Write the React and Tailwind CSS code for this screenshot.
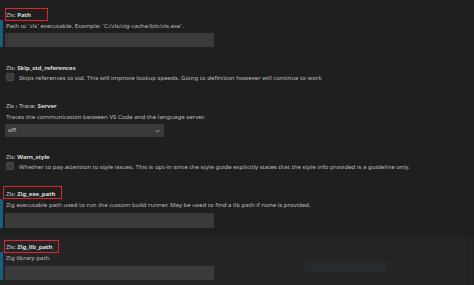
import React from "react";

const font = { fontFamily: '"Noto Sans", "Open Sans", sans-serif' };

function Title({ prefix, name, box }) {
  return (
    <div className="relative pl-[6px] h-[11px] leading-[11px] text-[6.1px] text-[#cccccc] whitespace-nowrap">
      {prefix} <span className="font-semibold text-[#ececec]">{name}</span>
      {box && (
        <div
          className={`absolute h-[13px] border-[1.5px] border-[#e3242b] ${box}`}
        />
      )}
    </div>
  );
}

function Body({ active, children }) {
  return (
    <div
      className={`border-l-[3px] pl-[3px] ${
        active ? "border-[#17607f]" : "border-transparent"
      }`}
    >
      {children}
    </div>
  );
}

function Desc({ children }) {
  return (
    <div className="h-[11px] leading-[11px] text-[6.1px] text-[#bdbdbd] whitespace-nowrap">
      {children}
    </div>
  );
}

function TextInput({ h = "h-[14px]" }) {
  return <div className={`mt-[2.5px] -ml-[1px] w-[209px] ${h} bg-[#3a3a3a]`} />;
}

function Check({ children }) {
  return (
    <div className="flex items-start gap-[5px] h-[9px]">
      <div className="w-[8px] h-[8px] bg-[#3a3a3a] border-[0.5px] border-[#4a4a4a] rounded-[1px] shrink-0" />
      <div className="leading-[9px] text-[6.1px] text-[#bdbdbd] whitespace-nowrap">
        {children}
      </div>
    </div>
  );
}

export default function App() {
  return (
    <div
      className="w-[474px] h-[285px] overflow-hidden bg-[#1f1f1f] flex flex-col relative"
      style={font}
    >
      <div className="pt-[8.5px]">
        <Title prefix="Zls:" name="Path" box="left-[5px] w-[43px] top-[-0.5px]" />
        <Body active>
          <Desc>Path to `zls` executable. Example: `C:/zls/zig-cache/bin/zls.exe`.</Desc>
          <TextInput />
        </Body>
      </div>

      <div className="mt-[14.5px]">
        <Title prefix="Zls:" name="Skip_std_references" />
        <Body>
          <Check>
            Skips references to std. This will improve lookup speeds. Going to
            definition however will continue to work
          </Check>
        </Body>
      </div>

      <div className="mt-[18px]">
        <Title prefix="Zls › Trace:" name="Server" />
        <Body>
          <Desc>Traces the communication between VS Code and the language server.</Desc>
          <div className="mt-[2.5px] -ml-[1px] w-[159px] h-[13px] bg-[#3a3a3a] flex items-center justify-between pl-[3px] pr-[4px]">
            <span className="text-[6.1px] text-[#d4d4d4] leading-none">off</span>
            <svg width="5" height="4" viewBox="0 0 10 6" fill="none">
              <path d="M1 1l4 4 4-4" stroke="#c0c0c0" strokeWidth="1.4" />
            </svg>
          </div>
        </Body>
      </div>

      <div className="mt-[14px]">
        <Title prefix="Zls:" name="Warn_style" />
        <Body>
          <Check>
            Whether to pay attention to style issues. This is opt-in since the
            style guide explicitly states that the style info provided is a
            guideline only.
          </Check>
        </Body>
      </div>

      <div className="mt-[17px]">
        <Title prefix="Zls:" name="Zig_exe_path" box="left-[3px] w-[59px] top-[-2.5px]" />
        <Body active>
          <Desc>
            Zig executable path used to run the custom build runner. May be used
            to find a lib path if none is provided.
          </Desc>
          <TextInput h="h-[15px]" />
        </Body>
      </div>

      <div className="mt-[9px] flex-1 bg-[#252525] pt-[4.5px] mr-[8px] relative">
        <Title prefix="Zls:" name="Zig_lib_path" box="left-[4px] w-[55px] top-[-1.5px]" />
        <Body active>
          <Desc>Zig library path</Desc>
          <TextInput />
        </Body>
        <div className="absolute left-[305px] top-[25px] w-[81px] h-[10px] bg-[#272d33] opacity-80" />
      </div>
      <div className="absolute right-0 top-[237px] w-[8px] h-[48px] bg-[#222222]" />
    </div>
  );
}
